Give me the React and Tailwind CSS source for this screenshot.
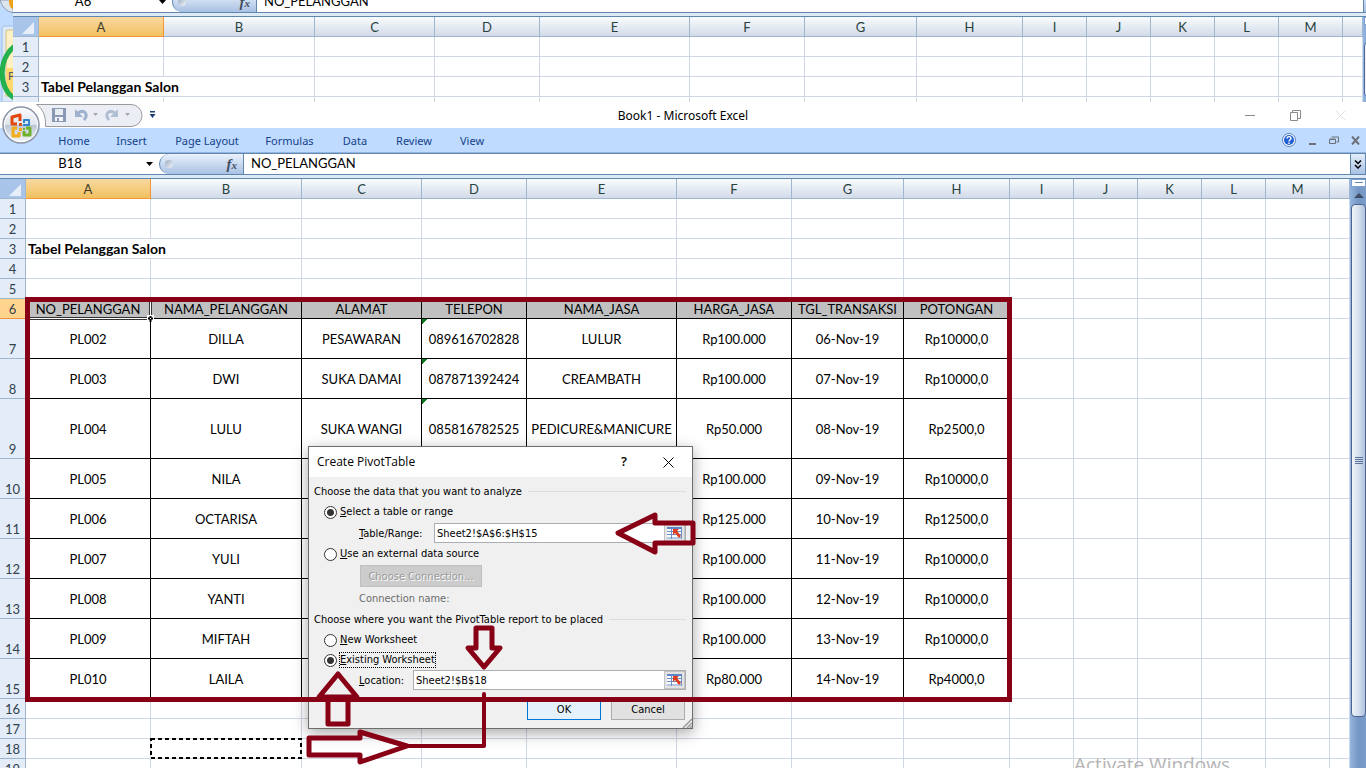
const columns = [
  { name: 'A', width: 'w-[125px]' },
  { name: 'B', width: 'w-[151px]' },
  { name: 'C', width: 'w-[120px]' },
  { name: 'D', width: 'w-[105px]' },
  { name: 'E', width: 'w-[150px]' },
  { name: 'F', width: 'w-[115px]' },
  { name: 'G', width: 'w-[112px]' },
  { name: 'H', width: 'w-[106px]' },
  { name: 'I', width: 'w-[64px]' },
  { name: 'J', width: 'w-[64px]' },
  { name: 'K', width: 'w-[64px]' },
  { name: 'L', width: 'w-[64px]' },
  { name: 'M', width: 'w-[64px]' },
  { name: '', width: 'w-auto' },
]

const topRows = [{ n: 1 }, { n: 2 }, { n: 3, title: 'Tabel Pelanggan Salon' }, { n: 4 }]

const rows = [
  { n: 1 },
  { n: 2 },
  { n: 3, title: 'Tabel Pelanggan Salon' },
  { n: 4 },
  { n: 5 },
  {
    n: 6,
    head: true,
    cells: ['NO_PELANGGAN', 'NAMA_PELANGGAN', 'ALAMAT', 'TELEPON', 'NAMA_JASA', 'HARGA_JASA', 'TGL_TRANSAKSI', 'POTONGAN'],
  },
  { n: 7, height: 'h-10', cells: ['PL002', 'DILLA', 'PESAWARAN', '089616702828', 'LULUR', 'Rp100.000', '06-Nov-19', 'Rp10000,0'] },
  { n: 8, height: 'h-10', cells: ['PL003', 'DWI', 'SUKA DAMAI', '087871392424', 'CREAMBATH', 'Rp100.000', '07-Nov-19', 'Rp10000,0'] },
  { n: 9, height: 'h-15', cells: ['PL004', 'LULU', 'SUKA WANGI', '085816782525', 'PEDICURE&MANICURE', 'Rp50.000', '08-Nov-19', 'Rp2500,0'] },
  { n: 10, height: 'h-10', cells: ['PL005', 'NILA', '', '', '', 'Rp100.000', '09-Nov-19', 'Rp10000,0'] },
  { n: 11, height: 'h-10', cells: ['PL006', 'OCTARISA', '', '', '', 'Rp125.000', '10-Nov-19', 'Rp12500,0'] },
  { n: 12, height: 'h-10', cells: ['PL007', 'YULI', '', '', '', 'Rp100.000', '11-Nov-19', 'Rp10000,0'] },
  { n: 13, height: 'h-10', cells: ['PL008', 'YANTI', '', '', '', 'Rp100.000', '12-Nov-19', 'Rp10000,0'] },
  { n: 14, height: 'h-10', cells: ['PL009', 'MIFTAH', '', '', '', 'Rp100.000', '13-Nov-19', 'Rp10000,0'] },
  { n: 15, height: 'h-10', cells: ['PL010', 'LAILA', '', '', '', 'Rp80.000', '14-Nov-19', 'Rp4000,0'] },
  { n: 16 },
  { n: 17 },
  { n: 18 },
  { n: 19 },
]

const tabs = [
  { label: 'Home', width: 'w-[58px]' },
  { label: 'Insert', width: 'w-[57px]' },
  { label: 'Page Layout', width: 'w-[94px]' },
  { label: 'Formulas', width: 'w-[71px]' },
  { label: 'Data', width: 'w-[60px]' },
  { label: 'Review', width: 'w-[58px]' },
  { label: 'View', width: 'w-[58px]' },
]

function FormulaBar({ cell }) {
  return (
    <div className="border-b border-[#5f87b0] bg-[#dfeaf7] pb-[3px]">
      <div className="flex h-[22px] border-y border-[#5f87b0] bg-white">
        <input
          aria-label="Name Box"
          readOnly
          value={cell}
          className="w-[140px] bg-white text-center text-[13px] outline-none"
        />
        <button type="button" aria-label="Open name list" className="flex w-[19px] items-center justify-center">
          <svg width="7" height="4" viewBox="0 0 7 4">
            <path d="M0 0h7L3.500 4z" fill="#000" />
          </svg>
        </button>
        <div className="flex w-[85px] items-center justify-between rounded-l-full border-r border-l border-[#5f87b0] bg-linear-to-b from-[#eaf2fc] to-[#a9c1e3] pr-1.5 pl-[5px]">
          <span className="size-2 rounded-full bg-linear-to-br from-[#9aa9bd] to-[#f4f7fb]" />
          <button type="button" className="font-['Liberation_Serif',serif] text-[15px] leading-none font-bold text-[#44505e] italic">
            f<span className="text-[11px]">x</span>
          </button>
        </div>
        <input
          aria-label="Formula"
          readOnly
          value="NO_PELANGGAN"
          className="min-w-0 flex-1 bg-white px-[7px] text-[13px] outline-none"
        />
        <button
          type="button"
          aria-label="Expand formula bar"
          className="flex w-4 items-center justify-center border-x border-[#5f87b0] bg-linear-to-b from-[#e3edf9] to-[#a9c1e3]"
        >
          <svg width="8" height="9" viewBox="0 0 8 9" fill="none" stroke="#000" strokeWidth="1.500">
            <path d="M1 .5l3 3 3-3M1 5l3 3 3-3" />
          </svg>
        </button>
      </div>
    </div>
  )
}

function ScrollBar() {
  return (
    <div className="flex w-4 shrink-0 flex-col border-l border-[#8fb4e6] bg-linear-to-r from-[#93b2d9] via-[#7396c4] to-[#7b9dca]">
      <div className="flex h-2 justify-center border border-[#7ba0cf] bg-white pt-0.5">
        <span className="h-px w-2 bg-[#5f87b0]" />
      </div>
      <button type="button" aria-label="Scroll up" className="flex h-[17px] items-center justify-center">
        <svg width="10" height="5" viewBox="0 0 10 5">
          <path d="M0 5h10L5 0z" fill="#3f4d66" />
        </svg>
      </button>
      <div className="flex flex-10 flex-col items-center justify-center gap-px rounded-sm border border-[#51658f] bg-linear-to-r from-[#f2f4f8] via-[#d5dfee] to-[#b0c3df]">
        {[0, 1, 2, 3].map((line) => (
          <span key={line} className="h-px w-2 bg-[#5b739c]" />
        ))}
      </div>
      <div className="flex-1" />
    </div>
  )
}

function GridRow({ row }) {
  const filled = row.cells || []
  const active = row.n === 6
  return (
    <tr className={row.height || 'h-5'}>
      <th
        scope="row"
        className={`border-r border-b p-0 align-bottom font-normal leading-[17px] text-[#30414f] ${
          active ? 'border-[#f29536] bg-[#ffd58d]' : 'border-[#9eb6ce] bg-[#e4ecf7]'
        }`}
      >
        {row.n}
      </th>
      {columns.map((col, i) => {
        if (row.title && i === 0) {
          return (
            <td key={i} colSpan={2} className="border-r border-b border-[#d0d7e5] px-0.5 py-0 text-left text-sm leading-[18px] font-bold">
              {row.title}
            </td>
          )
        }
        if (row.title && i === 1) return null
        if (i < filled.length) {
          const phone = i === 3 && !row.head
          return (
            <td
              key={i}
              className={`border-r border-b border-black p-0 text-center whitespace-nowrap ${row.head ? 'bg-[#c0c0c0]' : ''} ${
                phone ? 'bg-[linear-gradient(135deg,#0b7a1c_4px,transparent_4px)]' : ''
              }`}
            >
              {filled[i]}
            </td>
          )
        }
        return <td key={i} className="border-r border-b border-[#d0d7e5] p-0" />
      })}
    </tr>
  )
}

function Sheet({ data }) {
  return (
    <div className="flex min-h-0 flex-1 overflow-hidden">
      <div className="min-w-0 flex-1 overflow-hidden bg-white">
        <table className="w-full table-fixed border-separate border-spacing-0 text-[13px] leading-[18px]">
          <thead>
            <tr className="h-5">
              <th className="w-[26px] border-r border-b border-[#9eb6ce] bg-[#a9c4e9] p-0">
                <svg className="mt-0.5 mr-1 ml-auto" width="12" height="12" viewBox="0 0 12 12">
                  <path d="M12 0v12H0z" fill="#e6eef9" />
                </svg>
              </th>
              {columns.map((col) => (
                <th
                  key={col.name}
                  scope="col"
                  className={`border-r border-b p-0 font-normal ${col.width} ${
                    col.name === 'A'
                      ? 'border-[#f29536] bg-linear-to-b from-[#f9d99f] to-[#f1c15f] text-[#40402a]'
                      : 'border-[#9eb6ce] bg-linear-to-b from-[#f9fcfd] to-[#d3dbe9] text-[#27413e]'
                  }`}
                >
                  {col.name}
                </th>
              ))}
            </tr>
          </thead>
          <tbody>
            {data.map((row) => (
              <GridRow key={row.n} row={row} />
            ))}
          </tbody>
        </table>
      </div>
      <ScrollBar />
    </div>
  )
}

function BackWindow() {
  return (
    <section className="flex h-[102px] shrink-0 overflow-hidden font-['Lato',sans-serif]">
      <svg className="shrink-0" width="13" height="102" viewBox="0 0 13 102">
        <rect width="13" height="102" fill="#bfdbff" />
        <path d="M0 0a18 18 0 0 0 13 13V0z" fill="#dce4ee" stroke="#8c9cb0" />
        <path d="M9 0h4v9c-3-1-4-4-4-9z" fill="#f0a21c" />
        <path d="M13.500 26H4q-2 0-2 3v73h11.500z" fill="#dbe8f8" stroke="#a2bfe4" />
        <path d="M13.500 30H8q-2 0-2 2v64h7.500z" fill="#fdf0c4" stroke="#d9c07c" />
        <path d="M6.500 68h7v28h-7z" fill="#ffd86b" />
        <text x="8" y="80" fontSize="11" fill="#3b4a75" className="font-['Noto_Sans',sans-serif]">
          P
        </text>
        <path d="M15 46C-2 58-2 88 14 98" fill="none" stroke="#22b14c" strokeWidth="5" />
      </svg>
      <div className="-mt-[9px] flex w-full shrink-0 flex-col">
        <FormulaBar cell="A6" />
        <Sheet data={topRows} />
      </div>
    </section>
  )
}

function OfficeButton() {
  return (
    <button type="button" aria-label="Office Button" className="absolute top-1 left-0.5 z-10">
      <svg width="38" height="38" viewBox="0 0 38 38">
        <defs>
          <linearGradient id="orb" x1="0" y1="0" x2="0" y2="1">
            <stop offset="0" stopColor="#fdfdfe" />
            <stop offset=".49" stopColor="#dfe4ec" />
            <stop offset=".5" stopColor="#b9c4d4" />
            <stop offset="1" stopColor="#f8fafc" />
          </linearGradient>
        </defs>
        <circle cx="19" cy="19" r="18" fill="url(#orb)" stroke="#8b95a5" strokeWidth="1.500" />
        <circle cx="19" cy="19" r="16.500" fill="none" stroke="#fff" />
        <g fill="none" strokeWidth="3" strokeLinejoin="round">
          <path d="M15 18h-5v-7l8-2v6" stroke="#e4470e" />
          <path d="M22 17v-3h5v5h-4" stroke="#2d84cf" strokeWidth="2" />
          <path d="M15 22h-4v8h6v-4" stroke="#f3ab19" />
          <path d="M22 25v4h6v-7h-4" stroke="#6fb12c" />
        </g>
        <rect x="17" y="17" width="3" height="3" fill="#d8501c" />
        <rect x="21" y="18" width="2" height="2" fill="#2d84cf" />
        <rect x="17" y="22" width="3" height="3" fill="#f3ab19" />
        <rect x="21" y="22" width="2" height="2" fill="#6fb12c" />
      </svg>
    </button>
  )
}

function TitleBar() {
  return (
    <header className="relative shrink-0">
      <OfficeButton />
      <div className="relative flex h-[26px] items-center justify-center bg-white">
        <svg className="absolute top-0.5 left-9" width="122" height="24" viewBox="0 0 122 24">
          <path d="M.5.500H95a11 11 0 0 1 0 22H9.500C10 12 7 5 .5.500z" fill="#ebeff5" stroke="#9a9a9a" />
          {/* save */}
          <path d="M16 4h14v14H16z" fill="#8999b4" />
          <path d="M19 5h8v6h-8z" fill="#e8edf4" />
          <path d="M19 13h8v4h-8z" fill="#f3f6fa" />
          <path d="M21 14h2v3h-2z" fill="#8999b4" />
          {/* undo / redo */}
          <path d="M42 9c6-4 11 1 6 7" fill="none" stroke="#9fb1cd" strokeWidth="3" />
          <path d="M39 5v8h8z" fill="#9fb1cd" />
          <path d="M79 9c-6-4-11 1-6 7" fill="none" stroke="#b1bfd5" strokeWidth="3" />
          <path d="M82 5v8h-8z" fill="#b1bfd5" />
          <path d="M57 9h5l-2.500 3zM89 9h5l-2.500 3z" fill="#a6a6a6" />
          {/* customize */}
          <path d="M114 7h5v1.500h-5zM113.500 10h6l-3 4z" fill="#1e3d73" />
        </svg>
        <h1 className="pt-0.5 text-xs">Book1 - Microsoft Excel</h1>
        <div className="absolute top-0 right-5 flex h-full items-center gap-[34px] text-[#8a8a8a]">
          <button type="button" aria-label="Minimize">
            <svg width="11" height="11" viewBox="0 0 11 11">
              <path d="M0 5.500h10" stroke="currentColor" />
            </svg>
          </button>
          <button type="button" aria-label="Restore">
            <svg width="11" height="11" viewBox="0 0 11 11" fill="none" stroke="currentColor">
              <path d="M.5 2.500h7v8h-7zM2.500 2.500v-2h8v8h-3" />
            </svg>
          </button>
          <button type="button" aria-label="Close" className="text-[#e3e3e3]">
            <svg width="11" height="11" viewBox="0 0 11 11">
              <path d="M.5.500l10 10M10.500.5l-10 10" stroke="currentColor" />
            </svg>
          </button>
        </div>
      </div>
      <nav className="flex h-[25px] items-center border-b border-[#93b5dd] bg-[#bfdbff] pl-[45px] text-[11px] text-[#15428b]">
        {tabs.map((tab) => (
          <button key={tab.label} type="button" className={`pt-0.5 text-center whitespace-nowrap ${tab.width}`}>
            {tab.label}
          </button>
        ))}
        <div className="ml-auto flex items-center gap-3 pr-1.5 text-[#6c7078]">
          <button type="button" aria-label="Help">
            <svg width="14" height="14" viewBox="0 0 14 14">
              <circle cx="7" cy="7" r="6.500" fill="#fff" stroke="#5b7fb8" />
              <circle cx="7" cy="7" r="5" fill="#1f5fd6" />
              <path d="M5 5.500c0-2.500 4-2.500 4 0C9 7 7 6.500 7 8.500M7 9.500V11" fill="none" stroke="#fff" strokeWidth="1.400" />
            </svg>
          </button>
          <button type="button" aria-label="Minimize workbook">
            <svg width="9" height="9" viewBox="0 0 9 9">
              <path d="M1 7h7v2H1z" fill="currentColor" />
            </svg>
          </button>
          <button type="button" aria-label="Restore workbook">
            <svg width="10" height="9" viewBox="0 0 10 9" fill="none" stroke="currentColor">
              <path d="M.5 3.500h6v4h-6zM2.500 1h7v5h-2M.5 3h6" />
            </svg>
          </button>
          <button type="button" aria-label="Close workbook">
            <svg width="9" height="9" viewBox="0 0 9 9">
              <path d="M1 .5l7 8M8 .5l-7 8" stroke="currentColor" strokeWidth="2" />
            </svg>
          </button>
        </div>
      </nav>
    </header>
  )
}

function RefEdit({ id, value }) {
  return (
    <div className="flex h-5 min-w-0 flex-1 border border-[#abadb3] bg-white">
      <input id={id} readOnly value={value} className="min-w-0 flex-1 bg-white px-0.5 pt-0.5 outline-none" />
      <button
        type="button"
        aria-label="Collapse dialog"
        className="flex w-[21px] items-center justify-center border border-[#c3c3c3] bg-[#e3e3e3]"
      >
        <svg width="15" height="12" viewBox="0 0 15 12">
          <rect width="15" height="12" fill="#fff" />
          <path d="M0 0h15v2H0z" fill="#5d86c8" />
          <path d="M0 4.500h15M0 7.500h15M0 11h15M4.500 2v10M14.500 2v10" stroke="#6d8fca" />
          <path d="M6 2h6l-2 2 4 5-2 2-4-5-2 2z" fill="#e03c1f" />
        </svg>
      </button>
    </div>
  )
}

function GroupLabel({ children }) {
  return (
    <div className="flex h-5 items-center gap-1.5">
      <span className="pt-0.5 whitespace-nowrap">{children}</span>
      <span className="h-px flex-1 bg-[#dcdcdc]" />
    </div>
  )
}

const radioClass =
  'size-[13px] shrink-0 appearance-none rounded-full border border-[#333] bg-white checked:bg-[radial-gradient(circle,#333_3px,#fff_4px)]'

function PivotDialog() {
  return (
    <div
      role="dialog"
      aria-label="Create PivotTable"
      className="absolute top-[446px] left-[308px] w-[385px] border border-[#6d6d6d] bg-[#f0f0f0] font-['DejaVu_Sans_Condensed','DejaVu_Sans',sans-serif] text-[11px] text-black shadow-[0_4px_14px_rgba(0,0,0,0.35)]"
    >
      <div className="flex h-[30px] items-center bg-white pr-[18px] pl-2">
        <h2 className="flex-1 font-['Open_Sans',sans-serif] text-xs">Create PivotTable</h2>
        <button type="button" aria-label="Help" className="mr-9 font-['Open_Sans',sans-serif] text-[13px] font-semibold">
          ?
        </button>
        <button type="button" aria-label="Close">
          <svg width="11" height="11" viewBox="0 0 11 11">
            <path d="M.5.500l10 10M10.500.5l-10 10" stroke="#000" />
          </svg>
        </button>
      </div>
      <form className="flex flex-col gap-px pt-1 pr-1.5 pb-2 pl-[5px]">
        <GroupLabel>Choose the data that you want to analyze</GroupLabel>
        <label className="flex h-5 items-center gap-[3px] pl-2.5">
          <input type="radio" name="source" defaultChecked className={radioClass} />
          <span>
            <u>S</u>elect a table or range
          </span>
        </label>
        <div className="flex h-5 items-center pl-[45px]">
          <label htmlFor="range" className="w-[75px] pt-0.5">
            <u>T</u>able/Range:
          </label>
          <RefEdit id="range" value="Sheet2!$A$6:$H$15" />
        </div>
        <label className="flex h-5 items-center gap-[3px] pl-2.5">
          <input type="radio" name="source" className={radioClass} />
          <span>
            <u>U</u>se an external data source
          </span>
        </label>
        <button
          type="button"
          disabled
          className="ml-[46px] h-[22px] w-[122px] border border-[#bfbfbf] bg-[#cccccc] pt-0.5 text-[#9a9a9a] [text-shadow:1px_1px_0_#fff]"
        >
          Choose Connection...
        </button>
        <p className="flex h-5 items-center pt-0.5 pl-[45px] text-[#6d6d6d]">Connection name:</p>
        <GroupLabel>Choose where you want the PivotTable report to be placed</GroupLabel>
        <label className="flex h-5 items-center gap-[3px] pl-2.5">
          <input type="radio" name="place" className={radioClass} />
          <span>
            <u>N</u>ew Worksheet
          </span>
        </label>
        <label className="flex h-[18px] items-center gap-0.5 pl-2.5">
          <input type="radio" name="place" defaultChecked className={radioClass} />
          <span className="border border-dotted border-black leading-[14px]">
            <u>E</u>xisting Worksheet
          </span>
        </label>
        <div className="flex h-5 items-center pl-[45px]">
          <label htmlFor="location" className="w-[54px] pt-0.5">
            <u>L</u>ocation:
          </label>
          <RefEdit id="location" value="Sheet2!$B$18" />
        </div>
        <div className="mt-[7px] flex justify-end gap-2.5 pr-px">
          <button type="button" className="h-[22px] w-[74px] border border-[#0078d7] bg-[#e5f1fb] pt-0.5">
            OK
          </button>
          <button type="button" className="h-[22px] w-[74px] border border-[#adadad] bg-[#e1e1e1] pt-0.5">
            Cancel
          </button>
        </div>
      </form>
      <svg className="absolute right-0 bottom-0" width="10" height="10" viewBox="0 0 10 10">
        <path d="M1 10l9-9M5 10l5-5M8 10l2-2" stroke="#9a9a9a" strokeWidth="1.500" />
      </svg>
    </div>
  )
}

function Annotations() {
  return (
    <svg
      className="pointer-events-none absolute top-0 left-0"
      width="1366"
      height="768"
      viewBox="0 0 1366 768"
      fill="none"
      stroke="#880015"
      strokeWidth="5"
      strokeLinejoin="round"
    >
      <path d="M27.500 299.500h982v400h-982z" strokeLinejoin="miter" />
      <path d="M693 523h-38v-8l-37 18 37 19v-9h38z" />
      <path d="M476 628h16v20h8l-16 19-16-19h8z" />
      <path d="M338 674l19 23h-38zM328 699v25h20v-25" />
      <path d="M309 738h51v-6l47 14-47 16v-7h-51z" />
      <path d="M407 746h77v-52" strokeWidth="4" strokeLinecap="round" />
    </svg>
  )
}

export default function App() {
  return (
    <main className="relative flex h-screen flex-col overflow-hidden bg-white font-['Noto_Sans',sans-serif] text-black">
      <BackWindow />
      <TitleBar />
      <div className="flex min-h-0 flex-1 flex-col font-['Lato',sans-serif]">
        <FormulaBar cell="B18" />
        <Sheet data={rows} />
      </div>
      {/* copy handle of the selected header cell */}
      <svg className="pointer-events-none absolute top-[302px] left-[30px]" width="124" height="20" viewBox="0 0 124 20">
        <path d="M0 15.500h119.500V0M0 17.500h121.500V0" fill="none" stroke="#333" />
        <path d="M0 16.500h120.500V0" fill="none" stroke="#fff" />
        <path d="M117 13h7v7h-7z" fill="#fff" />
        <path d="M118 16.500h2M121 16.500h2M120.500 14v2M120.500 17v3" stroke="#000" strokeWidth="2" />
      </svg>
      <svg className="pointer-events-none absolute top-[738px] left-[150px]" width="152" height="21" viewBox="0 0 152 21">
        <rect x="1" y="1" width="150" height="19" fill="none" stroke="#000" strokeWidth="2" strokeDasharray="4 3" />
      </svg>
      <p className="pointer-events-none absolute top-[750px] left-[1074px] font-['Open_Sans',sans-serif] text-[19px] whitespace-nowrap text-[#b4b4b4]">
        Activate Windows
      </p>
      <PivotDialog />
      <Annotations />
    </main>
  )
}
